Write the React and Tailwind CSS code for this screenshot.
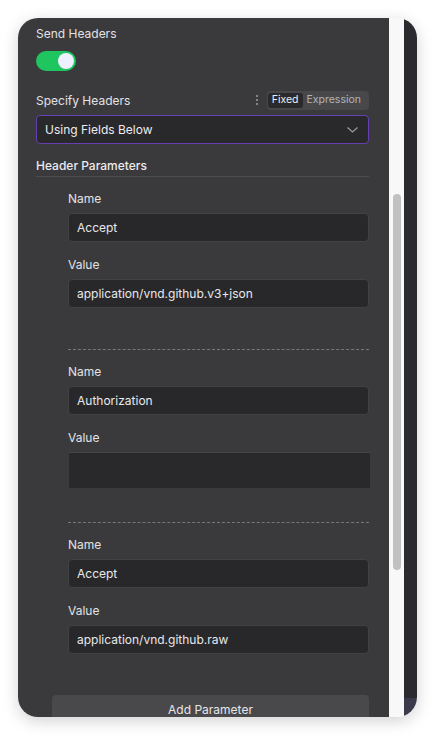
import React from 'react';

const FONT = { fontFamily: 'Inter, "Noto Sans", sans-serif' };

function Field({ label, value, className = '' }) {
  return (
    <div className={className}>
      <p className="text-[12px] leading-[22px] text-[#e2e2e4]">{label}</p>
      <div className="mt-[3px] h-[29px] flex items-center px-[8px] rounded-[4px] bg-[#28282b] border border-[#424245] text-[12px] text-[#e8e8ea]">
        {value}
      </div>
    </div>
  );
}

function EmptyValue({ className = '' }) {
  return (
    <div className={className}>
      <p className="text-[12px] leading-[22px] text-[#e2e2e4]">Value</p>
      <div className="mt-[3px] ml-px -mr-px h-[36px] bg-[#29292c] border-t border-[#46464a]" />
    </div>
  );
}

function Dashed({ className = '' }) {
  return <div className={`border-t border-dashed border-[#78787c] ${className}`} />;
}

export default function App() {
  return (
    <div className="w-[435px] h-[736px] bg-white overflow-hidden" style={FONT}>
      <div className="ml-[18px] mt-[18px] w-[399px] h-[699px] rounded-[20px] overflow-hidden flex shadow-[0_4px_16px_rgba(0,0,0,0.18)]">
        {/* Main panel */}
        <div className="w-[371px] h-full bg-[#3a3a3d] pl-[18px] pr-[20px] pt-[5px] overflow-hidden">
          <p className="text-[12px] leading-[22px] text-[#e2e2e4]">Send Headers</p>

          {/* Toggle */}
          <div className="mt-[6px] w-[40px] h-[20px] rounded-full bg-[#1fc55f] flex items-center justify-end pr-[2px]">
            <div className="w-[16px] h-[16px] rounded-full bg-[#eef0ff]" />
          </div>

          {/* Specify Headers */}
          <div className="mt-[19px] flex items-center justify-between h-[20px]">
            <p className="text-[12px] leading-[20px] pt-[2px] text-[#e2e2e4]">Specify Headers</p>
            <div className="flex items-center gap-[9px]">
              <div className="flex flex-col gap-[2px]">
                <span className="w-[2px] h-[2px] rounded-full bg-[#a0a0a4]" />
                <span className="w-[2px] h-[2px] rounded-full bg-[#a0a0a4]" />
                <span className="w-[2px] h-[2px] rounded-full bg-[#a0a0a4]" />
              </div>
              <div className="flex items-center h-[19px] rounded-[4px] bg-[#48484b] pl-[1px] pr-[4px] text-[10.5px]">
                <span className="h-[15px] px-[4px] rounded-[3px] bg-[#2a2a2d] text-[#f0f0f2] flex items-center">Fixed</span>
                <span className="px-[4px] text-[#b4b4b8]">Expression</span>
              </div>
            </div>
          </div>

          {/* Select */}
          <div className="mt-[5px] h-[29px] flex items-center justify-between pl-[8px] pr-[10px] rounded-[4px] bg-[#29292c] border border-[#6540b0] text-[12px] text-[#ececee]">
            <span>Using Fields Below</span>
            <svg width="11" height="6" viewBox="0 0 11 6" fill="none">
              <path d="M0.5 0.5L5.5 5L10.5 0.5" stroke="#9a9a9e" strokeWidth="1.2" />
            </svg>
          </div>

          {/* Header Parameters */}
          <div className="mt-[10px] border-b border-[#4c4c50]">
            <p className="text-[12px] leading-[21px] pt-[1px] font-medium text-[#ececee]">Header Parameters</p>
          </div>

          <div className="pl-[32px] pt-[11px]">
            <Field label="Name" value="Accept" />
            <Field label="Value" value="application/vnd.github.v3+json" className="mt-[12px]" />
            <Dashed className="mt-[41px]" />

            <Field label="Name" value="Authorization" className="mt-[11px]" />
            <EmptyValue className="mt-[12px]" />
            <Dashed className="mt-[34px]" />

            <Field label="Name" value="Accept" className="mt-[11px]" />
            <Field label="Value" value="application/vnd.github.raw" className="mt-[12px]" />
          </div>

          <div className="ml-[16px] mt-[41px] h-[30px] rounded-t-[4px] bg-[#49494c] flex items-center justify-center text-[12px] text-[#e6e6e8]">
            Add Parameter
          </div>
        </div>

        {/* Scrollbar track */}
        <div className="w-[15px] h-full bg-[#f8f8f8] pt-[176px] px-[4px]">
          <div className="w-[8px] h-[376px] rounded-full bg-[#c1c1c1]" />
        </div>

        {/* Right edge */}
        <div className="w-[13px] h-full flex flex-col">
          <div className="flex-1 bg-[#2b2b2f]" />
          <div className="h-[19px] bg-[#3b3a4a]" />
        </div>
      </div>
    </div>
  );
}
